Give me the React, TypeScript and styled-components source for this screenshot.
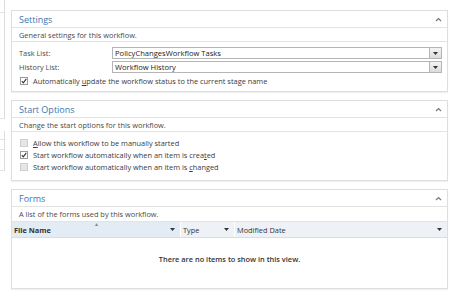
import React from 'react';
import styled, { createGlobalStyle } from 'styled-components';

const GlobalStyle = createGlobalStyle`
  html, body {
    margin: 0;
    padding: 0;
    background: #ffffff;
  }
  body {
    font-family: 'Open Sans', 'Noto Sans', 'Liberation Sans', sans-serif;
    color: #444444;
  }
`;

const PageStyled = styled.div`
  display: flex;
  width: 474px;
  height: 299px;
  overflow: hidden;
`;

const SideStyled = styled.div`
  width: 11px;
  flex: none;
  display: flex;
  flex-direction: column;
`;

const SideBlockStyled = styled.div<{ $h: number; $mt?: number }>`
  width: 4px;
  height: ${(p) => p.$h}px;
  margin-top: ${(p) => p.$mt || 0}px;
  border-right: 1px solid #dcdcdc;
  border-bottom: 1px solid #e4e4e4;
`;

const MainStyled = styled.div`
  width: 437px;
  padding-top: 10px;
  display: flex;
  flex-direction: column;
  gap: 8px;
`;

const PanelStyled = styled.section`
  border: 1px solid #dedede;
  box-shadow: 0 1px 1px rgba(0, 0, 0, 0.06);
  background: #fff;
`;

const PanelTitleStyled = styled.div`
  height: 16px;
  display: flex;
  align-items: center;
  justify-content: space-between;
  padding: 0 5px 0 7px;
  border-bottom: 1px solid #e3e3e3;
  font-size: 9px;
  color: #3a76b4;
`;

const ChevronStyled = styled.svg`
  width: 7px;
  height: 5px;
`;

const PanelDescStyled = styled.div<{ $line?: boolean; $h: number }>`
  height: ${(p) => p.$h}px;
  display: flex;
  align-items: center;
  padding-left: 7px;
  font-size: 7.4px;
  color: #4a4a4a;
  border-bottom: ${(p) => (p.$line ? '1px solid #e3e3e3' : 'none')};
`;

const PanelBodyStyled = styled.div<{ $pt: number; $pb: number; $gap: number }>`
  padding: ${(p) => p.$pt}px 5px ${(p) => p.$pb}px 7px;
  display: flex;
  flex-direction: column;
  gap: ${(p) => p.$gap}px;
`;

const FieldRowStyled = styled.div`
  display: flex;
  align-items: center;
  height: 12px;
`;

const LabelStyled = styled.span`
  width: 93px;
  font-size: 7.4px;
  color: #4a4a4a;
`;

const SelectStyled = styled.div`
  flex: 1;
  height: 12px;
  box-sizing: border-box;
  border: 1px solid #b5b5b5;
  display: flex;
  align-items: center;
  justify-content: space-between;
  font-size: 7.6px;
  color: #222;
  padding-left: 2px;
`;

const SelectButtonStyled = styled.span`
  width: 12px;
  height: 10px;
  box-sizing: border-box;
  border-left: 1px solid #b5b5b5;
  background: linear-gradient(#f4f4f4, #dcdcdc);
  display: flex;
  align-items: center;
  justify-content: center;
`;

const CheckRowStyled = styled.label`
  display: flex;
  align-items: center;
  gap: 5px;
  height: 12px;
  font-size: 7.4px;
  color: #3a3a3a;
`;

const BoxStyled = styled.span<{ $checked?: boolean }>`
  width: 8px;
  height: 8px;
  box-sizing: border-box;
  border: 1px solid ${(p) => (p.$checked ? '#9a9a9a' : '#cfcfcf')};
  background: ${(p) => (p.$checked ? '#fff' : '#e6e6e6')};
  margin-left: 1px;
  display: flex;
  align-items: center;
  justify-content: center;
`;

const GridHeadStyled = styled.div`
  display: flex;
  height: 15px;
  background: #eef2f6;
  border-top: 1px solid #e3e3e3;
  border-bottom: 1px solid #d8dde3;
  font-size: 7.4px;
  color: #333;
`;

const HeadCellStyled = styled.div<{ $w?: number; $sorted?: boolean }>`
  position: relative;
  display: flex;
  align-items: center;
  justify-content: space-between;
  box-sizing: border-box;
  width: ${(p) => (p.$w ? `${p.$w}px` : 'auto')};
  flex: ${(p) => (p.$w ? 'none' : 1)};
  padding: 0 5px 0 2px;
  background: ${(p) => (p.$sorted ? '#e3ecf5' : 'transparent')};
  border-right: ${(p) => (p.$w ? '1px solid #ffffff' : 'none')};
  font-weight: ${(p) => (p.$sorted ? 700 : 500)};
`;

const SortMarkStyled = styled.span`
  position: absolute;
  top: -1px;
  left: 82px;
  font-size: 5px;
  color: #888;
`;

const EmptyStyled = styled.div`
  height: 50px;
  display: flex;
  align-items: center;
  justify-content: center;
  font-size: 7.4px;
  font-weight: 600;
  color: #333;
  padding-bottom: 8px;
  box-sizing: border-box;
`;

const Chevron = () => (
  <ChevronStyled viewBox="0 0 7 5">
    <path d="M1 4 L3.5 1.5 L6 4" fill="none" stroke="#777" strokeWidth="1.2" />
  </ChevronStyled>
);

const Arrow = ({ color = '#333' }: { color?: string }) => (
  <svg width="5" height="3" viewBox="0 0 5 3">
    <path d="M0 0 H5 L2.5 3 Z" fill={color} />
  </svg>
);

const Check = () => (
  <svg width="6" height="6" viewBox="0 0 6 6">
    <path d="M0.8 3.2 L2.3 4.8 L5.3 0.8" fill="none" stroke="#333" strokeWidth="1.1" />
  </svg>
);

const Panel = ({
  title,
  desc,
  line,
  descH = 13,
  children,
}: {
  title: string;
  desc: string;
  line?: boolean;
  descH?: number;
  children: React.ReactNode;
}) => (
  <PanelStyled>
    <PanelTitleStyled>
      <span>{title}</span>
      <Chevron />
    </PanelTitleStyled>
    <PanelDescStyled $line={line} $h={descH}>
      {desc}
    </PanelDescStyled>
    {children}
  </PanelStyled>
);

const Select = ({ value }: { value: string }) => (
  <SelectStyled>
    <span>{value}</span>
    <SelectButtonStyled>
      <Arrow />
    </SelectButtonStyled>
  </SelectStyled>
);

const CheckRow = ({ checked, children }: { checked?: boolean; children: React.ReactNode }) => (
  <CheckRowStyled>
    <BoxStyled $checked={checked}>{checked && <Check />}</BoxStyled>
    <span>{children}</span>
  </CheckRowStyled>
);

const App = () => (
  <PageStyled>
    <GlobalStyle />
    <SideStyled>
      <SideBlockStyled $h={12} />
      <SideBlockStyled $h={105} />
      <SideBlockStyled $h={8} $mt={12} />
      <SideBlockStyled $h={9} />
      <SideBlockStyled $h={20} />
    </SideStyled>
    <MainStyled>
      <Panel title="Settings" desc="General settings for this workflow." line>
        <PanelBodyStyled $pt={5} $pb={4} $gap={2}>
          <FieldRowStyled>
            <LabelStyled>Task List:</LabelStyled>
            <Select value="PolicyChangesWorkflow Tasks" />
          </FieldRowStyled>
          <FieldRowStyled>
            <LabelStyled>History List:</LabelStyled>
            <Select value="Workflow History" />
          </FieldRowStyled>
          <CheckRow checked>
            Automatically <u>u</u>pdate the workflow status to the current stage name
          </CheckRow>
        </PanelBodyStyled>
      </Panel>

      <Panel title="Start Options" desc="Change the start options for this workflow." line>
        <PanelBodyStyled $pt={5} $pb={7} $gap={0}>
          <CheckRow>
            <u>A</u>llow this workflow to be manually started
          </CheckRow>
          <CheckRow checked>
            Start workflow automatically when an item is crea<u>t</u>ed
          </CheckRow>
          <CheckRow>
            Start workflow automatically when an item is <u>c</u>hanged
          </CheckRow>
        </PanelBodyStyled>
      </Panel>

      <Panel title="Forms" desc="A list of the forms used by this workflow." descH={14}>
        <GridHeadStyled>
          <HeadCellStyled $w={169} $sorted>
            <SortMarkStyled>▲</SortMarkStyled>
            <span>File Name</span>
            <Arrow />
          </HeadCellStyled>
          <HeadCellStyled $w={54}>
            <span>Type</span>
            <Arrow />
          </HeadCellStyled>
          <HeadCellStyled>
            <span>Modified Date</span>
            <Arrow />
          </HeadCellStyled>
        </GridHeadStyled>
        <EmptyStyled>There are no items to show in this view.</EmptyStyled>
      </Panel>
    </MainStyled>
  </PageStyled>
);

export default App;
